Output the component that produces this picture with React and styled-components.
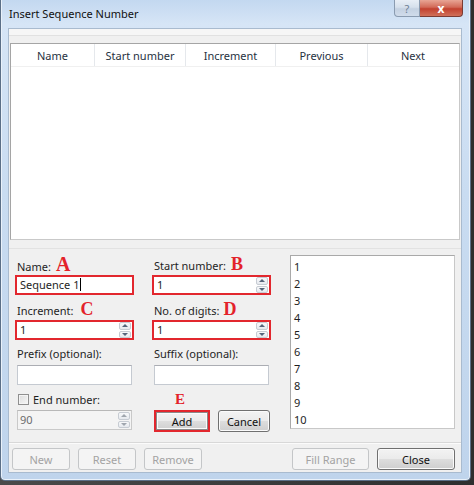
import React from "react";
import styled, { createGlobalStyle, css } from "styled-components";

const GlobalStyle = createGlobalStyle`
  html, body { margin: 0; padding: 0; }
  body {
    width: 474px;
    height: 485px;
    overflow: hidden;
    background: linear-gradient(90deg, #4a4a4a, #2e2e2e);
    font-family: "Noto Sans", "Segoe UI", sans-serif;
    font-size: 11px;
    color: #1e1e1e;
  }
  * { box-sizing: border-box; }
`;

const Window = styled.div`
  width: 471px;
  height: 481px;
  display: flex;
  flex-direction: column;
  padding: 0 8px 7px 7px;
  border: 1px solid #5b6f87;
  border-top: none;
  border-radius: 0 0 5px 5px;
  background: linear-gradient(180deg, #c3d8f0 0%, #d6e5f6 5%, #c9dcf1 40%, #bfd4ec 100%);
  box-shadow: inset 1px 0 0 #e9f1fa, inset -1px 0 0 #e9f1fa, inset 0 -1px 0 #e9f1fa;
`;

const TitleBar = styled.div`
  height: 28px;
  display: flex;
  align-items: flex-start;
  flex-shrink: 0;
`;

const Title = styled.div`
  padding-top: 7px;
  padding-left: 1px;
  font-size: 11px;
  line-height: 14px;
  color: #101010;
`;

const CaptionButtons = styled.div`
  margin-left: auto;
  margin-right: -1px;
  display: flex;
  height: 17px;
`;

const CaptionButton = styled.div`
  height: 17px;
  width: ${(p) => p.$w}px;
  display: flex;
  align-items: center;
  justify-content: center;
  border: 1px solid ${(p) => (p.$danger ? "#7a3b33" : "#8a9bb0")};
  border-top: none;
  ${(p) =>
    p.$danger
      ? css`
          border-left: none;
          border-radius: 0 0 4px 0;
          background: linear-gradient(180deg, #e8a595 0%, #d26a58 45%, #c2412f 55%, #d0705a 100%);
          color: #fff;
          font-weight: bold;
          font-size: 12px;
        `
      : css`
          border-radius: 0 0 0 4px;
          background: linear-gradient(180deg, #e8eef6 0%, #d6e0ec 45%, #c4d1e1 55%, #d0dceb 100%);
          color: #6d7e94;
          font-size: 11px;
        `}
`;

const Client = styled.div`
  flex: 1;
  display: flex;
  flex-direction: column;
  background: #f0f0f0;
  border: 1px solid #a9bbcf;
`;

const TopStrip = styled.div`
  height: 7px;
  flex-shrink: 0;
  background: #f6f6f6;
  border-bottom: 1px solid #e1e1e1;
`;

const ListView = styled.div`
  margin: 7px 1px 0 1px;
  height: 197px;
  flex-shrink: 0;
  background: #fff;
  border: 1px solid #a5a5a5;
  border-right-color: #c9c9c9;
  border-bottom-color: #c9c9c9;
  display: flex;
  flex-direction: column;
`;

const HeaderRow = styled.div`
  display: flex;
  height: 23px;
  background: #fff;
  border-bottom: 1px solid #f0f0f0;
`;

const HeaderCell = styled.div`
  width: ${(p) => p.$w}px;
  display: flex;
  align-items: center;
  justify-content: center;
  color: #27323f;
  border-right: 1px solid ${(p) => (p.$last ? "transparent" : "#e5e8ec")};
`;

const LowerPanel = styled.div`
  margin-top: 8px;
  border-top: 1px solid #e2e2e2;
  flex: 1;
  display: flex;
  flex-direction: column;
`;

const FormRow = styled.div`
  display: flex;
  align-items: flex-start;
  padding: 6px 5px 0 6px;
`;

const FieldColumn = styled.div`
  width: 119px;
  margin-right: ${(p) => p.$mr}px;
  display: flex;
  flex-direction: column;
  gap: 5px;
`;

const Field = styled.div`
  display: flex;
  flex-direction: column;
  gap: 2px;
`;

const Label = styled.div`
  height: 18px;
  display: flex;
  align-items: baseline;
  padding-left: ${(p) => p.$indent || 2}px;
  line-height: 18px;
  white-space: nowrap;
  color: #1e1e1e;
`;

const Marker = styled.span`
  font-family: "Liberation Serif", "Times New Roman", serif;
  font-weight: bold;
  color: #e3222a;
  font-size: ${(p) => p.$size}px;
  line-height: 18px;
  margin-left: ${(p) => p.$ml ?? 5}px;
`;

const InputBox = styled.div`
  height: 20px;
  display: flex;
  align-items: center;
  background: ${(p) => (p.$disabled ? "#f4f4f4" : "#fff")};
  color: ${(p) => (p.$disabled ? "#6d6d6d" : "#1e1e1e")};
  ${(p) =>
    p.$hl
      ? css`
          border: 2px solid #e2272e;
          padding-left: 3px;
        `
      : css`
          margin: 0 2px;
          border: 1px solid ${p.$disabled ? "#c9c9c9" : "#c5cad1"};
          border-top-color: ${p.$disabled ? "#b8b8b8" : "#abadb3"};
          padding-left: 2px;
        `}
`;

const InputText = styled.span`
  flex: 1;
  line-height: 16px;
`;

const Caret = styled.span`
  display: inline-block;
  width: 1px;
  height: 13px;
  background: #000;
  margin-left: 1px;
  vertical-align: -2px;
`;

const Spinner = styled.div`
  width: 12px;
  height: 16px;
  margin-right: 1px;
  display: flex;
  flex-direction: column;
  gap: 1px;
`;

const SpinHalf = styled.div`
  flex: 1;
  display: flex;
  align-items: center;
  justify-content: center;
  border: 1px solid #c7ccd3;
  border-radius: 2px;
  background: linear-gradient(180deg, #f7f8fa, #e6e9ee);
  &::after {
    content: "";
    border-left: 3px solid transparent;
    border-right: 3px solid transparent;
    ${(p) =>
      p.$down
        ? css`border-top: 3px solid ${p.$disabled ? "#a0a6ae" : "#55647a"};`
        : css`border-bottom: 3px solid ${p.$disabled ? "#a0a6ae" : "#55647a"};`}
  }
`;

const CheckLabel = styled.label`
  height: 18px;
  display: flex;
  align-items: center;
  gap: 4px;
  padding-left: 3px;
  color: #1e1e1e;
`;

const CheckBox = styled.span`
  width: 11px;
  height: 11px;
  border: 1px solid #8f8f8f;
  background: linear-gradient(135deg, #dcdcdc, #f6f6f6);
  box-shadow: inset 0 0 0 1px #f4f4f4;
`;

const ButtonPair = styled.div`
  display: flex;
  gap: 8px;
  padding-left: 2px;
`;

const Button = styled.div`
  height: ${(p) => p.$h || 22}px;
  width: ${(p) => p.$w}px;
  display: flex;
  align-items: center;
  justify-content: center;
  border-radius: 3px;
  ${(p) =>
    p.$disabled
      ? css`
          border: 1px solid #c4c6c8;
          background: #f4f4f4;
          color: #a3a3a3;
        `
      : css`
          border: 1px solid #707070;
          background: linear-gradient(180deg, #f3f3f3 0%, #ebebeb 48%, #dddddd 52%, #cfcfcf 100%);
          color: #111;
          box-shadow: inset 0 0 0 1px #fbfbfb;
        `}
  ${(p) =>
    p.$hl &&
    css`
      border: 2px solid #e2272e;
      border-radius: 0;
      box-shadow: inset 0 0 0 1px #8a8a8a, inset 0 0 0 2px #fbfbfb;
    `}
`;

const ListBox = styled.div`
  width: 165px;
  height: 174px;
  background: #fff;
  border: 1px solid #a9a9a9;
  border-right-color: #c8c8c8;
  border-bottom-color: #c8c8c8;
  padding: 2px 0 0 3px;
`;

const ListItem = styled.div`
  height: 17px;
  line-height: 17px;
  color: #1e1e1e;
`;

const Separator = styled.div`
  margin: 10px 0 0 0;
  border-top: 1px solid #d8d8d8;
  border-bottom: 1px solid #fbfbfb;
`;

const ButtonBar = styled.div`
  display: flex;
  padding: 4px 6px 0 3px;
  gap: 8px;
`;

const Spacer = styled.div`
  flex: 1;
`;

const columns = [
  ["Name", 84],
  ["Start number", 91],
  ["Increment", 90],
  ["Previous", 92],
  ["Next", 91],
];

function SpinInput({ value, hl, disabled }) {
  return (
    <InputBox $hl={hl} $disabled={disabled}>
      <InputText>{value}</InputText>
      <Spinner>
        <SpinHalf $disabled={disabled} />
        <SpinHalf $down $disabled={disabled} />
      </Spinner>
    </InputBox>
  );
}

export default function App() {
  return (
    <>
      <GlobalStyle />
      <Window>
        <TitleBar>
          <Title>Insert Sequence Number</Title>
          <CaptionButtons>
            <CaptionButton $w={26}>?</CaptionButton>
            <CaptionButton $w={43} $danger>
              x
            </CaptionButton>
          </CaptionButtons>
        </TitleBar>
        <Client>
          <TopStrip />
          <ListView>
            <HeaderRow>
              {columns.map(([name, w], i) => (
                <HeaderCell key={name} $w={w} $last={i === columns.length - 1}>
                  {name}
                </HeaderCell>
              ))}
            </HeaderRow>
          </ListView>
          <LowerPanel>
            <FormRow>
              <FieldColumn $mr={18}>
                <Field>
                  <Label>
                    Name:<Marker $size={20}>A</Marker>
                  </Label>
                  <InputBox $hl>
                    <InputText>
                      Sequence 1<Caret />
                    </InputText>
                  </InputBox>
                </Field>
                <Field>
                  <Label>
                    Increment:<Marker $size={18} $ml={7}>C</Marker>
                  </Label>
                  <SpinInput value="1" hl />
                </Field>
                <Field>
                  <Label>Prefix (optional):</Label>
                  <InputBox>
                    <InputText />
                  </InputBox>
                </Field>
                <Field>
                  <CheckLabel>
                    <CheckBox />
                    End number:
                  </CheckLabel>
                  <SpinInput value="90" disabled />
                </Field>
              </FieldColumn>
              <FieldColumn $mr={19}>
                <Field>
                  <Label>
                    Start number:<Marker $size={18}>B</Marker>
                  </Label>
                  <SpinInput value="1" hl />
                </Field>
                <Field>
                  <Label>
                    No. of digits:<Marker $size={18} $ml={4}>D</Marker>
                  </Label>
                  <SpinInput value="1" hl />
                </Field>
                <Field>
                  <Label>Suffix (optional):</Label>
                  <InputBox>
                    <InputText />
                  </InputBox>
                </Field>
                <Field>
                  <Label $indent={23}>
                    <Marker $size={15} $ml={0}>E</Marker>
                  </Label>
                  <ButtonPair>
                    <Button $w={56} $hl>
                      Add
                    </Button>
                    <Button $w={52}>Cancel</Button>
                  </ButtonPair>
                </Field>
              </FieldColumn>
              <ListBox>
                {Array.from({ length: 10 }, (_, i) => (
                  <ListItem key={i}>{i + 1}</ListItem>
                ))}
              </ListBox>
            </FormRow>
            <Separator />
            <ButtonBar>
              <Button $w={58} $disabled>
                New
              </Button>
              <Button $w={58} $disabled>
                Reset
              </Button>
              <Button $w={58} $disabled>
                Remove
              </Button>
              <Spacer />
              <Button $w={77} $disabled>
                Fill Range
              </Button>
              <Button $w={78}>Close</Button>
            </ButtonBar>
          </LowerPanel>
        </Client>
      </Window>
    </>
  );
}
